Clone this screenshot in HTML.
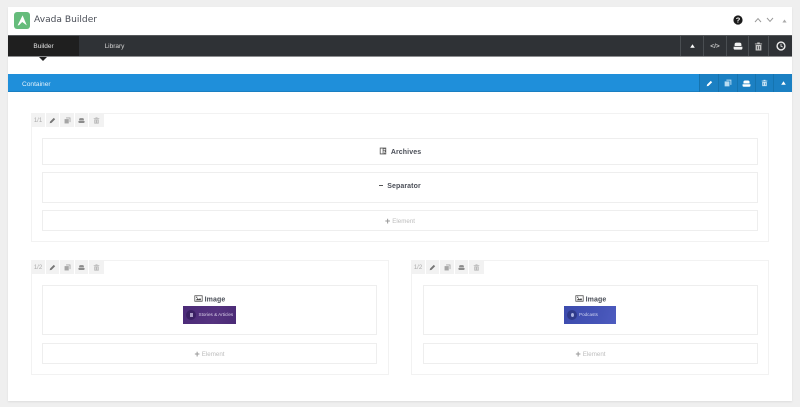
<!DOCTYPE html>
<html><head><meta charset="utf-8"><title>Avada Builder</title>
<style>
html{background:#efefef}
html,body{margin:0;padding:0;width:800px;height:407px;overflow:hidden;font-family:"Liberation Sans",sans-serif}
body{background:#efefef;filter:blur(.3px)}
.a{position:absolute;box-sizing:border-box}
#panel{left:8px;top:7px;width:784px;height:394px;background:#fff;box-shadow:0 1px 2px rgba(0,0,0,.08)}
.t{position:absolute;white-space:nowrap}
.box{position:absolute;box-sizing:border-box;border:1px solid #f2f2f2;background:#fff}
.el{position:absolute;box-sizing:border-box;border:1px solid #eee;background:#fff}
.tb{position:absolute;height:14px;background:#f2f2f2;display:flex}
.tb div{width:14.4px;height:14px;border-right:1px solid #fff;box-sizing:border-box;display:flex;align-items:center;justify-content:center;font-size:6px;color:#aaa}
.tb div:first-child{width:15px;padding-top:2px}
.tb svg{width:7px;height:7px}
.lbl{position:absolute;left:0;right:0;text-align:center;font-weight:bold;font-size:7px;color:#4a4e57;letter-spacing:.1px}
.add{position:absolute;left:0;right:0;text-align:center;font-size:6.2px;color:#bdbdbd}
.add b{color:#999;font-size:9px;font-weight:bold;vertical-align:-1px;margin-right:2px}
.cell{position:absolute;top:0;height:22px;border-left:1px solid #4a4e52;box-sizing:border-box;display:flex;align-items:center;justify-content:center}
.bc{position:absolute;top:0;height:18px;border-left:1px solid #1574b0;box-sizing:border-box;background:#1b80c3;display:flex;align-items:center;justify-content:center}
</style></head><body>
<svg width="0" height="0" style="position:absolute"><defs>
<symbol id="pen" viewBox="0 0 10 10"><path d="M1 9l.6-2.6L6.8 1.2l2 2L3.6 8.4z" fill="currentColor"/></symbol>
<symbol id="copy" viewBox="0 0 10 10"><path d="M3 0.8h6.2v6.6H8V2H3z" fill="currentColor"/><path d="M0.8 3h6v6.2h-6z" fill="currentColor"/></symbol>
<symbol id="save" viewBox="0 0 10 10"><path d="M1.6 5V3.4Q1.6 1.6 3.4 1.6h3.2Q8.4 1.6 8.4 3.4V5z" fill="currentColor"/><path d="M.6 5.8h8.8v1.4Q9.4 8.6 8 8.6H2Q.6 8.6.6 7.2z" fill="currentColor"/></symbol>
<symbol id="trash" viewBox="0 0 10 10"><path d="M3.6.6h2.8v1H9v1H1v-1h2.6z" fill="currentColor"/><path d="M1.8 3.4h6.4v6H1.8zM3.3 4.6v3.6h.8V4.6zM5.9 4.6v3.6h.8V4.6z" fill="currentColor" fill-rule="evenodd"/></symbol>
<symbol id="img" viewBox="0 0 10 10"><path d="M.5 1.5h9v7h-9zM1.3 2.3v5.4h7.4V2.3z" fill="currentColor" fill-rule="evenodd"/><path d="M2 7l2-2.4 1.4 1.4 1.4-1.6L8 7z" fill="currentColor"/><circle cx="3" cy="3.6" r=".7" fill="currentColor"/></symbol>
</defs></svg>

<div id="panel" class="a"></div>

<!-- header -->
<div class="a" style="left:14px;top:12px;width:16px;height:17px;border-radius:3px;background:#65bc7b"></div>
<svg class="a" style="left:14px;top:12px" width="16" height="17" viewBox="0 0 16 17"><path d="M8.6 3.4L12.8 13.4 8.2 10 5 13.2 3.6 13.4z" fill="#fff"/></svg>
<div class="t" style="left:34px;top:14px;font-family:'DejaVu Sans',sans-serif;font-size:9.1px;line-height:13px;color:#4a4e57">Avada Builder</div>
<svg class="a" style="left:733px;top:15px" width="10" height="10" viewBox="0 0 10 10"><circle cx="5" cy="5" r="4.6" fill="#1a1a1a"/><text x="5" y="7.6" font-size="7.5" font-weight="bold" text-anchor="middle" fill="#fff" font-family="Liberation Sans">?</text></svg>
<svg class="a" style="left:754px;top:17px" width="8" height="6" viewBox="0 0 8 6"><path d="M1 5l3-3.4L7 5" fill="none" stroke="#999" stroke-width="1"/></svg>
<svg class="a" style="left:766px;top:17px" width="8" height="6" viewBox="0 0 8 6"><path d="M1 1l3 3.4L7 1" fill="none" stroke="#999" stroke-width="1"/></svg>
<svg class="a" style="left:782px;top:19px" width="5" height="4" viewBox="0 0 5 4"><path d="M2.5 .5L4.6 3.5H.4z" fill="#aaa"/></svg>

<!-- dark bar -->
<div class="a" style="left:8px;top:35px;width:784px;height:22px;background:#2f3236;border-top:1px solid #55585b;border-bottom:1px solid #8d8e90"></div>
<div class="a" style="left:8px;top:36px;width:71px;height:20px;background:#1f1f1f"></div>
<div class="a" style="left:39px;top:57px;width:0;height:0;border-left:4.5px solid transparent;border-right:4.5px solid transparent;border-top:4px solid #1f1f1f"></div>
<div class="t" style="left:8px;width:71px;text-align:center;top:42px;font-size:6.5px;line-height:9px;color:#e6e6e6">Builder</div>
<div class="t" style="left:79px;width:71px;text-align:center;top:42px;font-size:6.5px;line-height:9px;color:#d4d4d4">Library</div>
<div class="a" style="left:0;top:36px;width:792px;height:20px">
<div class="cell" style="left:680px;width:23px;height:20px"><svg width="5" height="4" viewBox="0 0 5 4"><path d="M2.5 .3L4.8 3.7H.2z" fill="#fff"/></svg></div>
<div class="cell" style="left:703px;width:23px;height:20px;color:#ccc;font-size:6.5px;font-weight:bold">&lt;/&gt;</div>
<div class="cell" style="left:726px;width:22px;height:20px;color:#f2f2f2"><svg width="10" height="10"><use href="#save"/></svg></div>
<div class="cell" style="left:748px;width:20px;height:20px;color:#c8c8c8"><svg width="9" height="9"><use href="#trash"/></svg></div>
<div class="cell" style="left:768px;width:24px;height:20px"><svg width="10" height="10" viewBox="0 0 10 10"><circle cx="5" cy="5" r="3.9" fill="none" stroke="#eee" stroke-width="1.4"/><path d="M5 2.8V5.3L6.8 6" fill="none" stroke="#ddd" stroke-width=".9"/></svg></div>
</div>

<!-- blue bar -->
<div class="a" style="left:8px;top:74px;width:784px;height:18px;background:#1f8fda;border-bottom:1px solid #1a7fc2"></div>
<div class="t" style="left:22px;top:79.5px;font-size:6.6px;line-height:9px;color:#e4f2fb">Container</div>
<div class="a" style="left:0;top:74px;width:792px;height:18px">
<div class="bc" style="left:699px;width:19px;color:#fff"><svg width="7" height="7"><use href="#pen"/></svg></div>
<div class="bc" style="left:718px;width:19px;color:#b9dcf2"><svg width="8" height="8"><use href="#copy"/></svg></div>
<div class="bc" style="left:737px;width:18px;color:#fff"><svg width="9" height="9"><use href="#save"/></svg></div>
<div class="bc" style="left:755px;width:18px;color:#cfe6f5"><svg width="7" height="8"><use href="#trash"/></svg></div>
<div class="bc" style="left:773px;width:19px"><svg width="5" height="4" viewBox="0 0 5 4"><path d="M2.5 .3L4.8 3.7H.2z" fill="#fff"/></svg></div>
</div>

<!-- row 1 -->
<div class="box" style="left:31px;top:113px;width:738px;height:129px"></div>
<div class="tb" style="left:31px;top:113px;color:#777"><div>1/1</div><div style="color:#777"><svg><use href="#pen"/></svg></div><div style="color:#a5a5a5"><svg><use href="#copy"/></svg></div><div style="color:#8c8c8c"><svg><use href="#save"/></svg></div><div style="color:#b8b8b8;border-right:0"><svg><use href="#trash"/></svg></div></div>

<div class="el" style="left:42px;top:138px;width:716px;height:27px"></div>
<div class="lbl" style="left:42px;width:716px;right:auto;top:147px;line-height:9px;color:#4a4e57"><svg width="8" height="8" viewBox="0 0 10 10" style="vertical-align:-1px;margin-right:4px;color:#555"><path d="M1 .8h8v8.4H1zM2 1.8v6.4h2.6V1.8zM5.6 2.4v1.2h2.4V2.4zM5.6 4.6v3.6h.9V6.4L8 8.2V6.6L6.8 5.4 8 4.6z" fill="currentColor" fill-rule="evenodd"/></svg>Archives</div>

<div class="el" style="left:42px;top:172px;width:716px;height:31px"></div>
<div class="lbl" style="left:42px;width:716px;right:auto;top:182px;line-height:9px"><span style="display:inline-block;width:4px;height:1px;background:#555;vertical-align:2px;margin-right:4px"></span>Separator</div>

<div class="el" style="left:42px;top:210px;width:716px;height:21px"></div>
<div class="add" style="left:42px;width:716px;right:auto;top:217px;line-height:9px"><b>+</b>Element</div>

<!-- row 2 left -->
<div class="box" style="left:31px;top:260px;width:358px;height:115px"></div>
<div class="tb" style="left:31px;top:260px"><div>1/2</div><div style="color:#777"><svg><use href="#pen"/></svg></div><div style="color:#a5a5a5"><svg><use href="#copy"/></svg></div><div style="color:#8c8c8c"><svg><use href="#save"/></svg></div><div style="color:#b8b8b8;border-right:0"><svg><use href="#trash"/></svg></div></div>
<div class="el" style="left:42px;top:285px;width:335px;height:50px"></div>
<div class="lbl" style="left:42px;width:335px;right:auto;top:294px;line-height:10px"><svg width="9" height="9" style="vertical-align:-1.5px;margin-right:2px;color:#444"><use href="#img"/></svg>Image</div>
<div class="a" style="left:183px;top:306px;width:53px;height:18px;background:linear-gradient(110deg,#4b2a78,#55337f 60%,#4a2a76);overflow:hidden"></div>
<div class="a" style="left:186px;top:310px;width:10px;height:10px;border-radius:50%;background:#3a2063"></div>
<div class="a" style="left:189.5px;top:313px;width:3px;height:4px;background:#a99bc4"></div>
<div class="t" style="left:198.5px;top:312px;font-size:4.6px;line-height:6px;color:#d9cfe8">Stories &amp; Articles</div>
<div class="el" style="left:42px;top:343px;width:335px;height:21px"></div>
<div class="add" style="left:42px;width:335px;right:auto;top:350px;line-height:9px"><b>+</b>Element</div>

<!-- row 2 right -->
<div class="box" style="left:411px;top:260px;width:358px;height:115px"></div>
<div class="tb" style="left:411px;top:260px"><div>1/2</div><div style="color:#777"><svg><use href="#pen"/></svg></div><div style="color:#a5a5a5"><svg><use href="#copy"/></svg></div><div style="color:#8c8c8c"><svg><use href="#save"/></svg></div><div style="color:#b8b8b8;border-right:0"><svg><use href="#trash"/></svg></div></div>
<div class="el" style="left:423px;top:285px;width:335px;height:50px"></div>
<div class="lbl" style="left:423px;width:335px;right:auto;top:294px;line-height:10px"><svg width="9" height="9" style="vertical-align:-1.5px;margin-right:2px;color:#444"><use href="#img"/></svg>Image</div>
<div class="a" style="left:564px;top:306px;width:52px;height:18px;background:linear-gradient(110deg,#3c4bad,#4655b8 70%,#4e5cc0);overflow:hidden"></div>
<div class="a" style="left:567px;top:310px;width:10px;height:10px;border-radius:50%;background:#2f3a8a"></div>
<div class="a" style="left:570.5px;top:313px;width:3px;height:4px;border-radius:50%;background:#aab2e0"></div>
<div class="t" style="left:579px;top:312px;font-size:4.6px;line-height:6px;color:#cfd4f0">Podcasts</div>
<div class="el" style="left:423px;top:343px;width:335px;height:21px"></div>
<div class="add" style="left:423px;width:335px;right:auto;top:350px;line-height:9px"><b>+</b>Element</div>
</body></html>
